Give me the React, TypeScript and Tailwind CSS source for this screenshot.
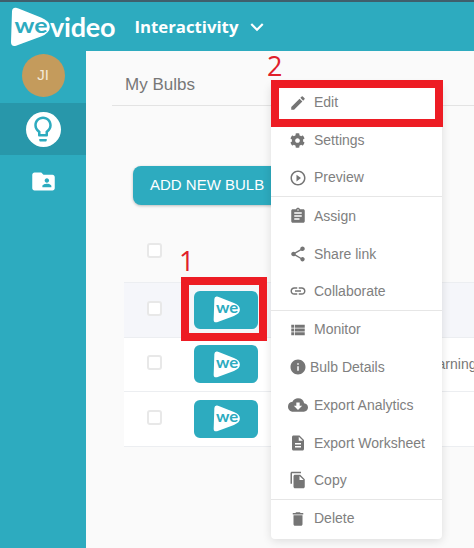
import React from "react";
import {
  MdEdit, MdPlayCircleOutline, MdAssignment, MdShare, MdLink, MdViewList, MdInfo,
  MdCloudDownload, MdDescription, MdFileCopy, MdDelete, MdLightbulbOutline, MdFolderShared, MdKeyboardArrowDown,
} from "react-icons/md";
import { FaCog } from "react-icons/fa";

const sans = "font-['Liberation_Sans',Arial,sans-serif]";

function WeMark({ size, fill, text }: { size: number; fill: string; text: string }) {
  return (
    <svg width={size} height={size} viewBox="0 0 40 40" className="shrink-0">
      <path d="M6 0.8 Q2.2 0.4 2 4.5 L1 35 Q1 40 6 38.8 L31 29.5 Q39.8 26 39.8 20 Q39.8 14 31 10.5 L8.5 1.5 Z" fill={fill} />
      <text x="21" y="25.5" textAnchor="middle" textLength="33" lengthAdjust="spacingAndGlyphs" fontFamily="Lato, 'Open Sans', sans-serif" fontWeight="700" fontSize="21" fill={text}>we</text>
    </svg>
  );
}

const items = [
  { Icon: MdEdit, label: "Edit", size: 18 },
  { Icon: FaCog, label: "Settings", size: 15 },
  { Icon: MdPlayCircleOutline, label: "Preview", size: 18, divider: true },
  { Icon: MdAssignment, label: "Assign", size: 18 },
  { Icon: MdShare, label: "Share link", size: 18 },
  { Icon: MdLink, label: "Collaborate", size: 18, divider: true },
  { Icon: MdViewList, label: "Monitor", size: 18 },
  { Icon: MdInfo, label: "Bulb Details", size: 18, tight: true },
  { Icon: MdCloudDownload, label: "Export Analytics", size: 20 },
  { Icon: MdDescription, label: "Export Worksheet", size: 18 },
  { Icon: MdFileCopy, label: "Copy", size: 18, divider: true },
  { Icon: MdDelete, label: "Delete", size: 18 },
];

function Check() {
  return <span className="block w-[15px] h-[15px] rounded-[3px] border-2 border-[#e8e8e8] bg-white" />;
}

function Row({ highlighted, note }: { highlighted?: boolean; note?: string }) {
  return (
    <div className={`h-[54.5px] flex items-center border-b border-[#eceef1] overflow-hidden ${highlighted ? "bg-[#f5f6fa]" : "bg-white"}`}>
      <div className="w-[70px] shrink-0 pl-[23px] mb-[3px]"><Check /></div>
      <div className="w-[64px] h-[38px] shrink-0 rounded-[6px] bg-[#2dabbf] flex items-center justify-center">
        <WeMark size={27} fill="#ffffff" text="#2dabbf" />
      </div>
      <span className="ml-[164px] text-[14px] text-[#777] whitespace-nowrap">{note}</span>
    </div>
  );
}

export default function App() {
  return (
    <div className={`relative w-[474px] h-[548px] overflow-hidden flex flex-col bg-[#fafafa] ${sans}`}>
      <div className="h-[2px] bg-[#3f5f6c]" />
      <header className="h-[49px] bg-[#2dabbf] flex items-center text-white">
        <div className="ml-[10px]"><WeMark size={40} fill="#ffffff" text="#2dabbf" /></div>
        <span className="font-['Lato',sans-serif] font-bold text-[27px] leading-none tracking-[-0.2px]">video</span>
        <span className="ml-[19px] pt-[2px] font-['Open_Sans',sans-serif] font-bold text-[16.8px] leading-none">Interactivity</span>
        <MdKeyboardArrowDown className="ml-[6px]" size={26} />
      </header>
      <div className="flex-1 flex min-h-0">
        <aside className="w-[86px] bg-[#2dabbf] flex flex-col">
          <div className="h-[52px] pb-[4px] flex items-center justify-center">
            <div className="w-[43px] h-[43px] rounded-full bg-[#c49b5c] text-[#f3e9d8] text-[15px] flex items-center justify-center">JI</div>
          </div>
          <div className="h-[52px] bg-[#2897aa] flex items-center justify-center">
            <div className="w-[35px] h-[35px] rounded-full bg-white flex items-center justify-center text-[#2dabbf]">
              <MdLightbulbOutline size={30} />
            </div>
          </div>
          <div className="h-[52px] flex items-center justify-center text-white">
            <MdFolderShared size={27} />
          </div>
        </aside>
        <main className="flex-1 min-w-0">
          <div className="ml-[26px] h-[55px] border-b border-[#e3e3e3] flex items-center pl-[13px] pt-[14px] text-[17px] text-[#777]">My Bulbs</div>
          <div className="ml-[47px] mt-[60px] w-[160px] h-[39px] rounded-[8px] bg-[#2dabbf] shadow-[0_1px_3px_rgba(0,0,0,0.25)] flex items-center pl-[17px] text-white text-[15px] whitespace-nowrap">
            ADD NEW BULB
          </div>
          <div className="ml-[38px] mt-[23px]">
            <div className="h-[55px] border-b border-[#eceef1] pl-[23px] pt-[15px]"><Check /></div>
            <Row highlighted />
            <Row note="Learning" />
            <Row />
          </div>
        </main>
      </div>

      <div className="absolute left-[271px] top-[84px] w-[171px] bg-white rounded-[4px] shadow-[0_2px_10px_rgba(0,0,0,0.12)] text-[#808080] text-[14px] pb-[1px]">
        {items.map(({ Icon, label, size, divider, tight }) => (
          <div key={label} className={`h-[37.8px] flex items-center ${divider ? "border-b border-[#e6e6e6]" : ""}`}>
            <div className="w-[43px] shrink-0 flex justify-center pl-[10px] text-[#757575]"><Icon size={size} /></div>
            <span className={tight ? "-ml-[4px]" : ""}>{label}</span>
          </div>
        ))}
      </div>

      <div className="absolute left-[181px] top-[277px] w-[86px] h-[64px] border-[8px] border-[#ed1c24]" />
      <div className="absolute left-[271px] top-[80px] w-[172px] h-[47px] border-[8px] border-[#ed1c24]" />
      <span className="absolute left-[179px] top-[246px] text-[27px] leading-[30px] text-[#e0202a] font-['Open_Sans',sans-serif]">1</span>
      <span className="absolute left-[267px] top-[51px] text-[27px] leading-[30px] text-[#e0202a] font-['Open_Sans',sans-serif]">2</span>
    </div>
  );
}
